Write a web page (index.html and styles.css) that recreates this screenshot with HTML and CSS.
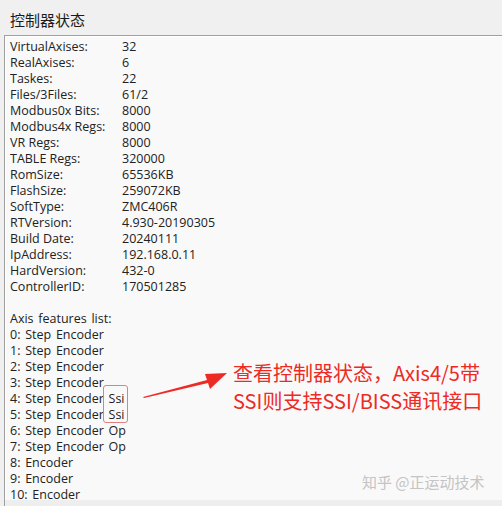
FILE: index.html
```html
<!DOCTYPE html>
<html>
<head>
<meta charset="utf-8">
<link rel="stylesheet" href="styles.css">
</head>
<body>
<div class="title">控制器状态</div>
<div class="panel">
  <div class="kv">
    <span>VirtualAxises:</span><span>32</span>
    <span>RealAxises:</span><span>6</span>
    <span>Taskes:</span><span>22</span>
    <span>Files/3Files:</span><span>61/2</span>
    <span>Modbus0x Bits:</span><span>8000</span>
    <span>Modbus4x Regs:</span><span>8000</span>
    <span>VR Regs:</span><span>8000</span>
    <span>TABLE Regs:</span><span>320000</span>
    <span>RomSize:</span><span>65536KB</span>
    <span>FlashSize:</span><span>259072KB</span>
    <span>SoftType:</span><span>ZMC406R</span>
    <span>RTVersion:</span><span>4.930-20190305</span>
    <span>Build Date:</span><span>20240111</span>
    <span>IpAddress:</span><span>192.168.0.11</span>
    <span>HardVersion:</span><span>432-0</span>
    <span>ControllerID:</span><span>170501285</span>
  </div>
  <div class="list">
    <div class="line">&nbsp;</div>
    <div class="line">Axis features list:</div>
    <div class="line">0: Step Encoder</div>
    <div class="line">1: Step Encoder</div>
    <div class="line">2: Step Encoder</div>
    <div class="line">3: Step Encoder</div>
    <div class="line">4: Step Encoder Ssi</div>
    <div class="line">5: Step Encoder Ssi</div>
    <div class="line">6: Step Encoder Op</div>
    <div class="line">7: Step Encoder Op</div>
    <div class="line">8: Encoder</div>
    <div class="line">9: Encoder</div>
    <div class="line">10: Encoder</div>
  </div>
  <div class="hl-box"></div>
  <svg class="arrow" width="100" height="40" viewBox="0 0 100 40">
    <polygon points="0,27 64,10 62,4 84,3 67,19 65,13 1,28" fill="#ee2a24"/>
  </svg>
  <div class="note">查看控制器状态，Axis4/5带<br>SSI则支持SSI/BISS通讯接口</div>
  <div class="mark">知乎 @正运动技术</div>
</div>
<div class="bottom"></div>
</body>
</html>
```
FILE: styles.css
```css
html, body {
  margin: 0;
  padding: 0;
  background: #f0f0f0;
  overflow: hidden;
}
body {
  width: 502px;
  height: 506px;
  font-family: "Open Sans", sans-serif;
  color: #222;
}
.title {
  height: 35px;
  box-sizing: border-box;
  padding: 10px 0 0 10px;
  font-family: "Noto Sans CJK SC", sans-serif;
  font-size: 15px;
  line-height: 20px;
  color: #1a1a1a;
}
.panel {
  position: relative;
  margin-left: 4px;
  height: 465px;
  box-sizing: border-box;
  border-top: 1px solid #a0a0a0;
  border-left: 1px solid #a0a0a0;
  background: #f9f9f9;
  box-shadow: inset 1px 1px 0 #ffffff;
  padding: 3px 0 0 5px;
  font-size: 12.5px;
  line-height: 16px;
}
.kv {
  display: grid;
  grid-template-columns: 112px auto;
}
.list {
  word-spacing: 1.5px;
}
.line {
  white-space: nowrap;
}
.bottom {
  margin-left: 4px;
  height: 6px;
  border-left: 1px solid #a0a0a0;
  background: #eeeeee;
}
.hl-box {
  position: absolute;
  left: 98px;
  top: 349px;
  width: 23px;
  height: 36px;
  border: 1.5px solid #e08080;
  border-radius: 3px;
}
.arrow {
  position: absolute;
  left: 138px;
  top: 334px;
}
.note {
  position: absolute;
  left: 228px;
  top: 323px;
  font-family: "Noto Sans CJK SC", sans-serif;
  font-size: 20px;
  line-height: 28px;
  color: #ee2a24;
  white-space: nowrap;
}
.mark {
  position: absolute;
  left: 357px;
  top: 436px;
  font-family: "Noto Sans CJK SC", sans-serif;
  font-size: 15px;
  line-height: 20px;
  color: #c4c4c4;
  white-space: nowrap;
}
```
